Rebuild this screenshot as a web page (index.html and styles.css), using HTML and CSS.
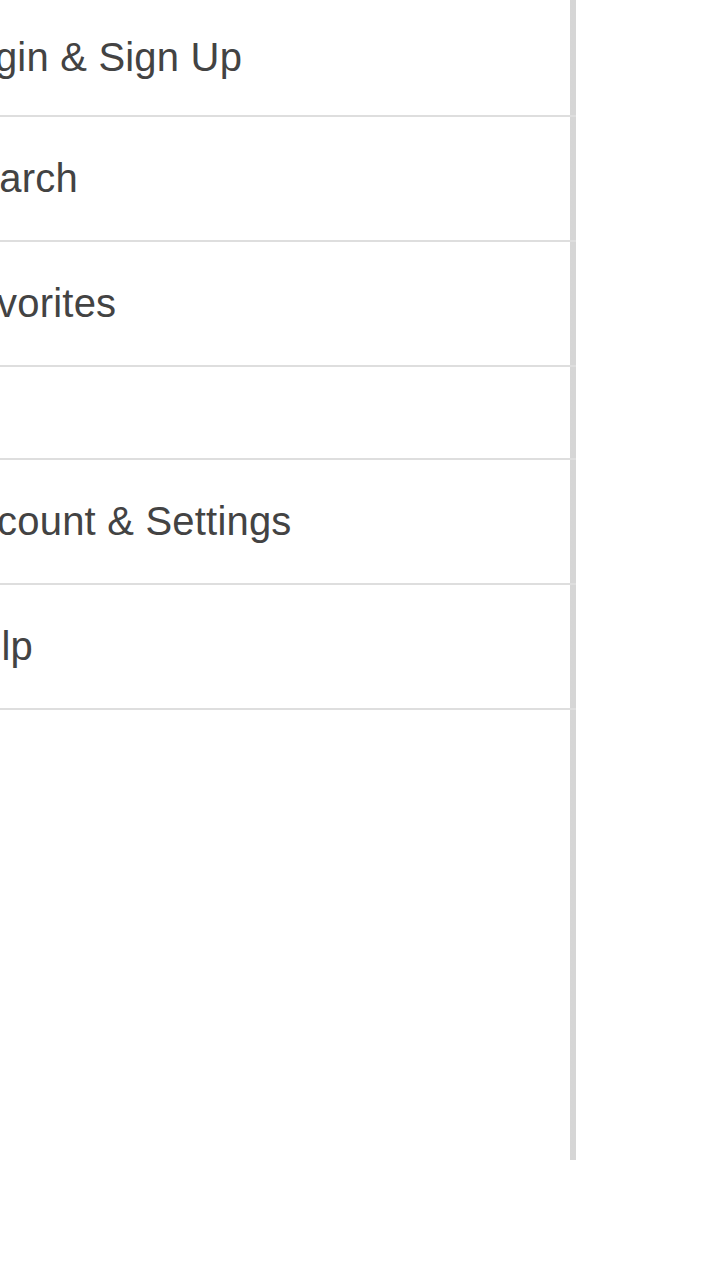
FILE: index.html
```html
<!DOCTYPE html>
<html>
<head>
<meta charset="utf-8">
<link rel="stylesheet" href="styles.css">
</head>
<body>
<nav class="drawer">
  <ul class="menu">
    <li class="item first"><span class="label">Login &amp; Sign Up</span></li>
    <li class="item"><span class="label">Search</span></li>
    <li class="item"><span class="label">Favorites</span></li>
    <li class="item empty"></li>
    <li class="item"><span class="label">Account &amp; Settings</span></li>
    <li class="item"><span class="label">Help</span></li>
  </ul>
</nav>
</body>
</html>
```
FILE: styles.css
```css
html, body {
  margin: 0;
  padding: 0;
  background: #ffffff;
}
body {
  width: 720px;
  height: 1280px;
  overflow: hidden;
  font-family: "Liberation Sans", Arial, sans-serif;
}
.drawer {
  width: 570px;
  height: 1160px;
  border-right: 6px solid #e6e6e6;
  border-image: linear-gradient(to right, #f6f6f6 0%, #ececec 40%, #e2e2e2 70%, #d6d6d6 100%) 1;
  box-sizing: content-box;
}
.menu {
  list-style: none;
  margin: 0;
  padding: 0;
  width: 576px;
  overflow: hidden;
}
.item {
  height: 123px;
  border-bottom: 2px solid #dedede;
  display: flex;
  align-items: center;
  font-size: 40px;
  color: #434343;
}
.item.first {
  height: 115px;
}
.item.empty {
  height: 91px;
}
.label {
  margin-left: -50px;
  white-space: nowrap;
  letter-spacing: 0.2px;
}
```
